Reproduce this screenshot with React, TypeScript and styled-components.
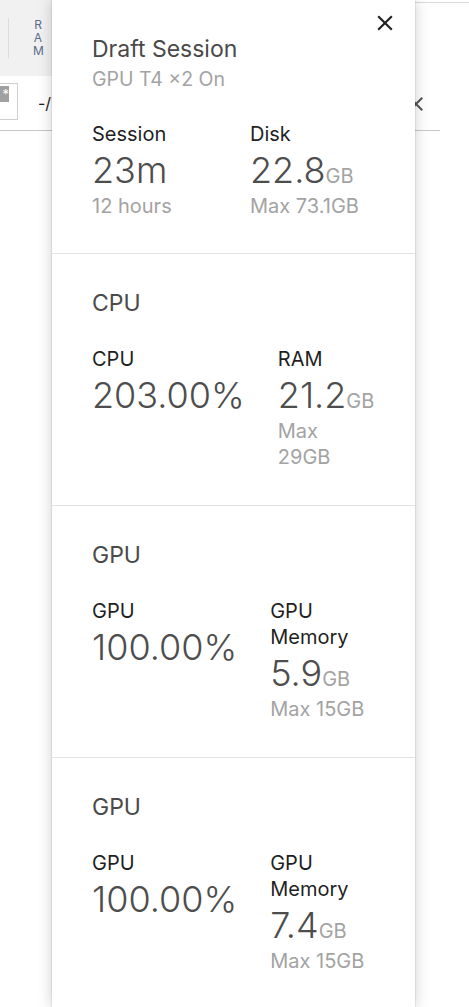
import styled, { createGlobalStyle } from 'styled-components'

const GlobalStyle = createGlobalStyle`
  html,
  body,
  #root {
    margin: 0;
    height: 100%;
  }
  body {
    overflow: hidden;
    background: #fff;
    font-family: Inter, 'Noto Sans', sans-serif;
  }
`

const Page = styled.div`
  position: relative;
  height: 100%;
  overflow: hidden;
`

/* the app that sits under the drawer */
const Backdrop = styled.div`
  display: flex;
  flex-direction: column;
`

const TopBar = styled.div`
  display: flex;
  height: 76px;
`

const ToolStrip = styled.div`
  width: 330px;
  background: #f1f1f1;
  display: flex;
  align-items: flex-start;
  padding-top: 18px;
  box-sizing: border-box;
`

const ToolDivider = styled.div`
  width: 1px;
  height: 40px;
  margin-left: 8px;
  background: #dcdcdc;
`

const StackedLabel = styled.div`
  margin-left: 24px;
  width: 10px;
  font-size: 12px;
  line-height: 13px;
  color: #5b6b8c;
  text-align: center;
`

const TopRight = styled.div`
  flex: 1;
  margin-top: 2px;
  border-top: 1px solid #dadada;
`

const EditorRow = styled.div`
  display: flex;
  align-items: center;
  width: 440px;
  height: 55px;
  border-bottom: 1px solid #c8c8c8;
  box-sizing: border-box;
`

const KeyBox = styled.div`
  margin-left: -20px;
  width: 38px;
  height: 37px;
  margin-top: -4px;
  border: 1px solid #cfcfcf;
  box-sizing: border-box;
  padding: 2px 0 0 19px;
`

const KeyChip = styled.div`
  width: 9px;
  height: 16px;
  background: #a0a0a0;
  color: #fff;
  font-size: 13px;
  line-height: 16px;
  text-align: right;
  overflow: hidden;
`

const PathText = styled.span`
  margin-left: 20px;
  font-size: 16px;
  color: #222;
`

const RowClose = styled.svg`
  margin-left: auto;
  margin-right: 12px;
  margin-top: 2px;
  fill: #555;
`

/* the drawer */
const Drawer = styled.aside`
  position: absolute;
  top: 0;
  left: 52px;
  width: 363px;
  height: 100%;
  background: #fff;
  box-shadow: 0 0 0 1px rgba(0, 0, 0, 0.06), 0 0 14px rgba(0, 0, 0, 0.2);
  overflow: hidden;
`

const CloseButton = styled.button`
  position: absolute;
  top: 10px;
  right: 17px;
  width: 26px;
  height: 26px;
  padding: 0;
  border: 0;
  background: none;
  cursor: pointer;
  svg {
    display: block;
    fill: #202124;
  }
`

const Section = styled.section<{ $last?: boolean }>`
  padding: 35px 40px ${p => (p.$last ? 0 : 35)}px;
  border-bottom: ${p => (p.$last ? 'none' : '1px solid #e3e3e3')};
`

const HeaderSection = styled(Section)`
  padding-bottom: 34px;
`

const Title = styled.h2`
  margin: 0;
  font-size: 23px;
  line-height: 28px;
  font-weight: 400;
  color: #4a4a4a;
`

const Subtitle = styled.div`
  margin-top: 2px;
  font-size: 19.5px;
  line-height: 28px;
  color: #a3a3a3;
`

const Stats = styled.div<{ $offset?: number }>`
  display: flex;
  gap: 33px;
  margin-top: ${p => p.$offset ?? 29}px;
`

const Stat = styled.div`
  flex: 1 1 0;
  min-width: auto;
`

const Label = styled.div`
  font-size: 20px;
  line-height: 26px;
  color: #1f1f1f;
`

const Value = styled.div`
  font-size: 36px;
  line-height: 46px;
  font-weight: 300;
  color: #4d4d4d;
  white-space: nowrap;
`

const Unit = styled.span`
  font-size: 20px;
  line-height: 1;
  font-weight: 400;
  color: #a3a3a3;
`

const Caption = styled.div`
  font-size: 20px;
  line-height: 26px;
  color: #a3a3a3;
`

const CloseIcon = ({ size = 26 }: { size?: number }) => (
  <svg width={size} height={size} viewBox='0 0 24 24'>
    <path d='M19 6.41 17.59 5 12 10.59 6.41 5 5 6.41 10.59 12 5 17.59 6.41 19 12 13.41 17.59 19 19 17.59 13.41 12z' />
  </svg>
)

type StatData = { label: string; value: string; unit?: string; caption: string }

const sections: { title: string; stats: StatData[] }[] = [
  {
    title: 'CPU',
    stats: [
      { label: 'CPU', value: '203.00%', caption: '' },
      { label: 'RAM', value: '21.2', unit: 'GB', caption: 'Max 29GB' },
    ],
  },
  {
    title: 'GPU',
    stats: [
      { label: 'GPU', value: '100.00%', caption: '' },
      { label: 'GPU Memory', value: '5.9', unit: 'GB', caption: 'Max 15GB' },
    ],
  },
  {
    title: 'GPU',
    stats: [
      { label: 'GPU', value: '100.00%', caption: '' },
      { label: 'GPU Memory', value: '7.4', unit: 'GB', caption: 'Max 15GB' },
    ],
  },
]

const StatBlock = ({ stat }: { stat: StatData }) => (
  <Stat>
    <Label>{stat.label}</Label>
    <Value>
      {stat.value}
      {stat.unit && <Unit>{stat.unit}</Unit>}
    </Value>
    {stat.caption && <Caption>{stat.caption}</Caption>}
  </Stat>
)

export default function App() {
  return (
    <Page>
      <GlobalStyle />
      <Backdrop>
        <TopBar>
          <ToolStrip>
            <ToolDivider />
            <StackedLabel>
              R<br />A<br />M
            </StackedLabel>
          </ToolStrip>
          <TopRight />
        </TopBar>
        <EditorRow>
          <KeyBox>
            <KeyChip>*</KeyChip>
          </KeyBox>
          <PathText>-/</PathText>
          <RowClose width='24' height='24' viewBox='0 0 24 24'>
            <path d='M19 6.41 17.59 5 12 10.59 6.41 5 5 6.41 10.59 12 5 17.59 6.41 19 12 13.41 17.59 19 19 17.59 13.41 12z' />
          </RowClose>
        </EditorRow>
      </Backdrop>

      <Drawer>
        <CloseButton aria-label='Close'>
          <CloseIcon />
        </CloseButton>

        <HeaderSection>
          <Title>Draft Session</Title>
          <Subtitle>GPU T4 ×2 On</Subtitle>
          <Stats $offset={28}>
            <StatBlock stat={{ label: 'Session', value: '23m', caption: '12 hours' }} />
            <StatBlock stat={{ label: 'Disk', value: '22.8', unit: 'GB', caption: 'Max 73.1GB' }} />
          </Stats>
        </HeaderSection>

        {sections.map((s, i) => (
          <Section key={i} $last={i === sections.length - 1}>
            <Title>{s.title}</Title>
            <Stats>
              {s.stats.map(st => (
                <StatBlock key={st.label} stat={st} />
              ))}
            </Stats>
          </Section>
        ))}
      </Drawer>
    </Page>
  )
}
